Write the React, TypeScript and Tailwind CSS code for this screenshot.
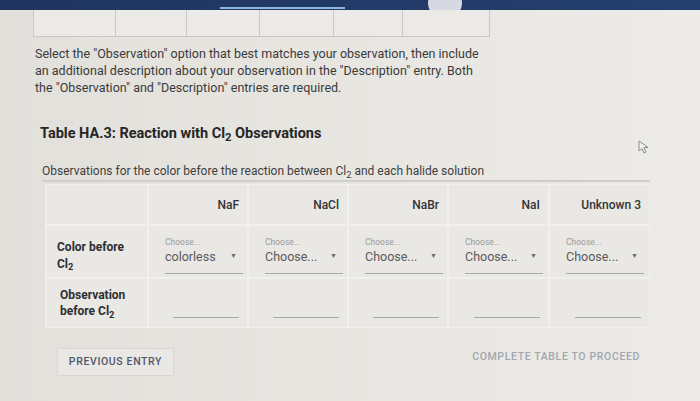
import React from 'react';

const font = { fontFamily: 'Roboto, "Liberation Sans", sans-serif' };

const columns = ['NaF', 'NaCl', 'NaBr', 'NaI', 'Unknown 3'];
const colorValues = ['colorless', 'Choose...', 'Choose...', 'Choose...', 'Choose...'];

const Cl2 = () => (
  <>
    Cl<sub className="relative top-[0.3em] text-[0.78em]">2</sub>
  </>
);

const SelectCell = ({ value }: { value: string }) => (
  <div className="flex h-full items-start pl-[16px] pt-[11px]">
    <div className="w-[78px] border-b border-[#a9a9ad] pb-[7px]">
      <div className="text-[8.5px] leading-[10px] text-[#9a9a9a]">Choose...</div>
      <div className="flex items-center justify-between pr-[6px] text-[12.5px] leading-[19px] text-[#5a5a5e]">
        <span>{value}</span>
        <span className="text-[7px] text-[#6a6a70]">▼</span>
      </div>
    </div>
  </div>
);

const InputCell = () => (
  <div className="flex h-full items-end justify-end pb-[9px] pr-[8px]">
    <div className="w-[66px] border-b border-[#a9a9ad]" />
  </div>
);

export default function App() {
  return (
    <div
      className="relative h-[401px] w-[700px] overflow-hidden bg-gradient-to-r from-[#e2e0db] via-[#e8e6e1] to-[#ecebe7]"
      style={font}
    >
      {/* top bar */}
      <div className="relative h-[10px] bg-gradient-to-r from-[#1f3560] to-[#243f6e]">
        <div className="absolute left-[220px] top-[7px] h-[2px] w-[125px] bg-[#8cb6de]" />
      </div>
      <div className="absolute left-[428px] top-[-12px] h-[30px] w-[34px] rounded-full bg-[#d6d8e4]" />
      <div className="relative ml-[33px] flex h-[27px] w-[457px] border-x border-b border-[#c9c8c4] bg-[#ebeae6]">
        <div className="w-[82px] border-r border-[#c9c8c4]" />
        <div className="w-[71px] border-r border-[#c9c8c4]" />
        <div className="w-[73px] border-r border-[#c9c8c4]" />
        <div className="w-[74px] border-r border-[#c9c8c4]" />
        <div className="w-[69px] border-r border-[#c9c8c4]" />
        <div className="flex-1" />
      </div>

      {/* instructions */}
      <p className="ml-[35px] mt-[8px] w-[450px] text-[12.5px] leading-[17px] text-[#3a3a3c]">
        Select the "Observation" option that best matches your observation, then include an additional
        description about your observation in the "Description" entry. Both the "Observation" and
        "Description" entries are required.
      </p>

      <h2 className="ml-[40px] mt-[28px] text-[14.5px] font-bold leading-[20px] text-[#262628]">
        Table HA.3: Reaction with <Cl2 /> Observations
      </h2>

      <div className="ml-[42px] mt-[19px] w-[608px]">
        <div className="border-b-2 border-[#cfcecb] pb-[1px] text-[12px] leading-[16px] text-[#3e3e40]">
          Observations for the color before the reaction between <Cl2 /> and each halide solution
        </div>
        <div className="ml-[3px] mt-[2px] grid grid-cols-[103px_100px_100px_100px_101px_101px] grid-rows-[41px_53px_50px] text-[12px]">
          <div className="border border-[#f1f0ed] bg-[#e9e8e4]" />
          {columns.map((c) => (
            <div
              key={c}
              className="flex items-center justify-end border border-[#f1f0ed] bg-[#e9e8e4] pr-[8px] font-medium text-[#343436]"
            >
              {c}
            </div>
          ))}

          <div className="flex items-center border border-[#f1f0ed] bg-[#e9e8e4] pl-[11px] pt-[8px] text-[12px] font-bold leading-[17px] text-[#2e2e30]">
            <div>
              Color before
              <br />
              <Cl2 />
            </div>
          </div>
          {colorValues.map((v, i) => (
            <div key={i} className="border border-[#f1f0ed] bg-[#e9e8e4]">
              <SelectCell value={v} />
            </div>
          ))}

          <div className="flex items-center border border-[#f1f0ed] bg-[#e9e8e4] pl-[14px] text-[12px] font-bold leading-[16px] text-[#2e2e30]">
            <div>
              Observation
              <br />
              before <Cl2 />
            </div>
          </div>
          {columns.map((c) => (
            <div key={c} className="border border-[#f1f0ed] bg-[#e9e8e4]">
              <InputCell />
            </div>
          ))}
        </div>
      </div>

      {/* footer buttons */}
      <div className="ml-[57px] mt-[20px] flex w-[583px] items-center justify-between">
        <button className="h-[28px] w-[117px] border border-[#d8d7d3] bg-[#e9e8e4] text-[10.5px] font-medium tracking-[0.06em] text-[#50586a]">
          PREVIOUS ENTRY
        </button>
        <span className="-mt-[10px] text-[10.5px] font-medium tracking-[0.06em] text-[#a2a6ae]">
          COMPLETE TABLE TO PROCEED
        </span>
      </div>

      {/* mouse cursor */}
      <svg className="absolute left-[638px] top-[140px]" width="12" height="14" viewBox="0 0 12 14">
        <path d="M1 1 L1 11 L4 8.5 L6 13 L8 12 L6 7.5 L10 7.5 Z" fill="#f2f2f2" stroke="#8a8a8a" strokeWidth="1" />
      </svg>
    </div>
  );
}
